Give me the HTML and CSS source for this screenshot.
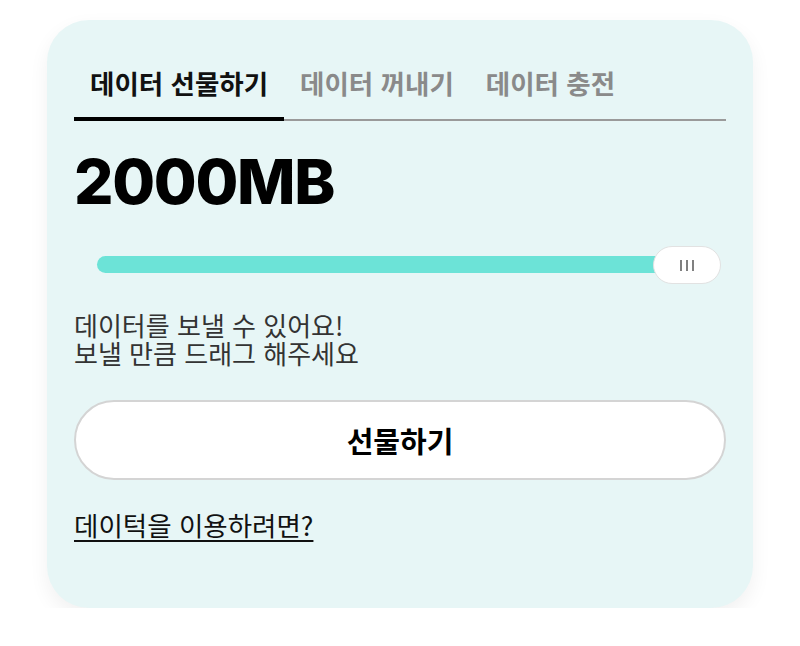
FILE: index.html
```html
<!DOCTYPE html>
<html lang="ko">
<head>
<meta charset="utf-8">
<link rel="stylesheet" href="styles.css">
</head>
<body>
<div class="card">
  <div class="tabs">
    <div class="tab active">데이터 선물하기</div>
    <div class="tab">데이터 꺼내기</div>
    <div class="tab">데이터 충전</div>
  </div>
  <div class="amount">2000MB</div>
  <div class="slider">
    <div class="track"></div>
    <div class="handle"><span></span><span></span><span></span></div>
  </div>
  <p class="desc">데이터를 보낼 수 있어요!<br>보낼 만큼 드래그 해주세요</p>
  <button class="gift">선물하기</button>
  <a class="link" href="#">데이턱을 이용하려면?</a>
</div>
</body>
</html>
```
FILE: styles.css
```css
* { box-sizing: border-box; }
html, body { margin: 0; padding: 0; background: #fff; }
body {
  font-family: "Noto Sans CJK KR", "Noto Sans", sans-serif;
  padding: 20px 47px 0 47px;
}
.card {
  width: 706px;
  height: 588px;
  background: #e7f6f6;
  border-radius: 42px;
  box-shadow: 0 8px 20px rgba(0,0,0,0.06);
  padding: 0 27px;
  display: flex;
  flex-direction: column;
}
.tabs {
  display: flex;
  margin-top: 44px;
  border-bottom: 2px solid #9a9a9a;
}
.tab {
  font-size: 26.5px;
  font-weight: 700;
  color: #8a8a8a;
  line-height: 38px;
  padding: 0 16px 17px 16px;
  letter-spacing: 0;
}
.tab.active {
  color: #111;
  box-shadow: inset 0 -4px 0 #000;
  margin-bottom: -2px;
  padding-bottom: 19px;
}
.amount {
  font-family: "Inter", "DejaVu Sans", sans-serif;
  font-weight: 800;
  font-size: 62px;
  line-height: 62px;
  margin-top: 30px;
  letter-spacing: -1.3px;
  color: #000;
}
.slider {
  position: relative;
  margin: 43px 5px 0 23px;
  height: 17px;
}
.track {
  height: 17px;
  width: 570px;
  background: #6ce3d7;
  border-radius: 9px;
}
.handle {
  position: absolute;
  right: 0;
  top: -10px;
  width: 68px;
  height: 38px;
  background: #fff;
  border: 1px solid #e2e2e2;
  border-radius: 19px;
  display: flex;
  align-items: center;
  justify-content: center;
  gap: 4px;
}
.handle span {
  width: 2px;
  height: 11px;
  background: #808080;
}
.desc {
  margin: 38px 0 0 0;
  font-size: 26px;
  line-height: 28px;
  color: #333;
}
.gift {
  margin-top: 33px;
  height: 80px;
  width: 100%;
  background: #fff;
  border: 2px solid #d4d4d4;
  border-radius: 40px;
  font-family: "Noto Sans CJK KR", sans-serif;
  font-size: 29px;
  font-weight: 700;
  color: #000;
}
.link {
  margin-top: 29px;
  font-size: 26.5px;
  line-height: 32px;
  color: #111;
  text-decoration: underline;
  text-underline-offset: 4px;
  align-self: flex-start;
}
```
